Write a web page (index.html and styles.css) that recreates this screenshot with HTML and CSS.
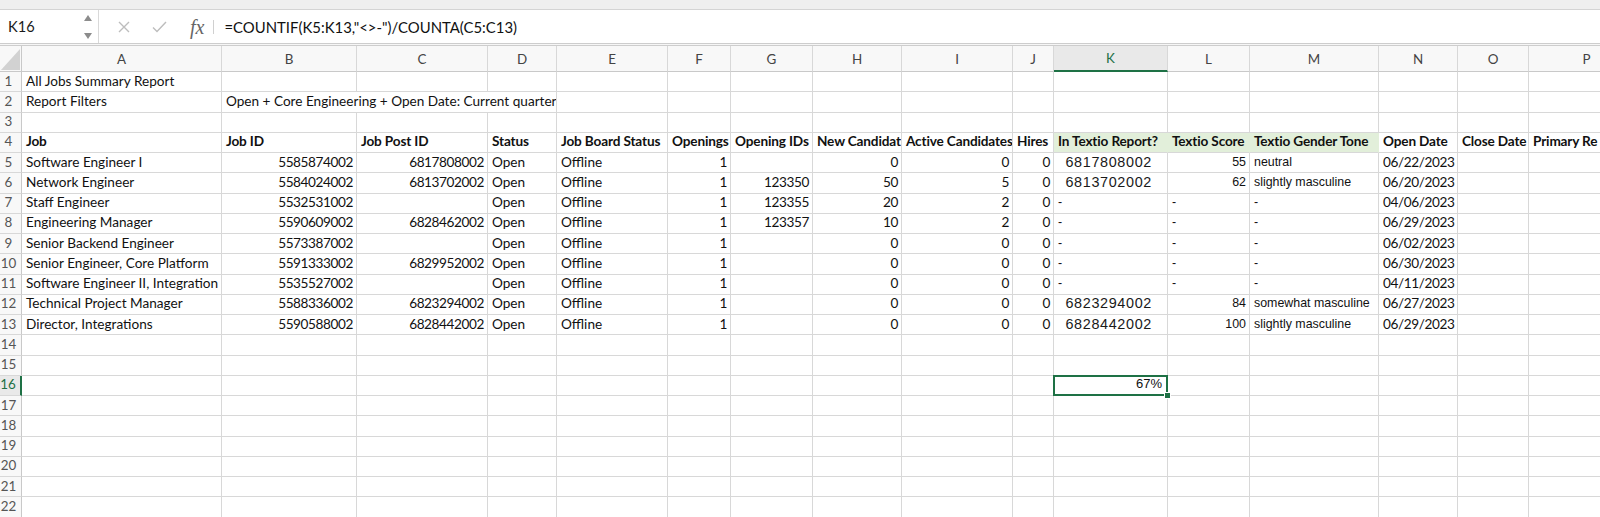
FILE: index.html
```html
<!DOCTYPE html>
<html lang="en">
<head>
<meta charset="utf-8">
<title>All Jobs Summary Report</title>
<link rel="stylesheet" href="styles.css">
</head>
<body>
<div class="top"></div>
<div class="fbar">
  <div class="namebox">
    <span class="ref">K16</span>
    <svg class="spin" viewBox="0 0 8 24" aria-hidden="true"><path d="M0 6 L4 0 L8 6 Z"/><path d="M0 18 L8 18 L4 24 Z"/></svg>
  </div>
  <svg class="ico ico-x" viewBox="0 0 12 12" aria-hidden="true"><path d="M1 1 L11 11 M11 1 L1 11"/></svg>
  <svg class="ico ico-ok" viewBox="0 0 15 12" aria-hidden="true"><path d="M1 6.5 L5 10.5 L14 1"/></svg>
  <span class="fx">fx</span>
  <span class="vsep"></span>
  <span class="formula">=COUNTIF(K5:K13,"&lt;&gt;-")/COUNTA(C5:C13)</span>
</div>
<div class="fsep"></div>
<table class="sheet">
<colgroup>
<col class="w-rh"><col class="w-a"><col class="w-b"><col class="w-c"><col class="w-d"><col class="w-e"><col class="w-f"><col class="w-g"><col class="w-h"><col class="w-i"><col class="w-j"><col class="w-k"><col class="w-l"><col class="w-m"><col class="w-n"><col class="w-o"><col class="w-p">
</colgroup>
<tr class="hdr"><th class="corner"><svg class="tri" viewBox="0 0 21 25" aria-hidden="true"><path d="M1 24 L20 24 L20 3 Z"/></svg></th><th class="ch">A</th><th class="ch">B</th><th class="ch">C</th><th class="ch">D</th><th class="ch">E</th><th class="ch">F</th><th class="ch">G</th><th class="ch">H</th><th class="ch">I</th><th class="ch">J</th><th class="ch on">K</th><th class="ch">L</th><th class="ch">M</th><th class="ch">N</th><th class="ch">O</th><th class="ch">P</th></tr>
<tr><th class="rh">1</th><td>All Jobs Summary Report</td><td></td><td></td><td></td><td></td><td></td><td></td><td></td><td></td><td></td><td></td><td></td><td></td><td></td><td></td><td></td></tr>
<tr><th class="rh">2</th><td>Report Filters</td><td colspan="3">Open + Core Engineering + Open Date: Current quarter</td><td></td><td></td><td></td><td></td><td></td><td></td><td></td><td></td><td></td><td></td><td></td><td></td></tr>
<tr><th class="rh">3</th><td></td><td></td><td></td><td></td><td></td><td></td><td></td><td></td><td></td><td></td><td></td><td></td><td></td><td></td><td></td><td></td></tr>
<tr><th class="rh">4</th><td class="b">Job</td><td class="b">Job ID</td><td class="b">Job Post ID</td><td class="b">Status</td><td class="b">Job Board Status</td><td class="b">Openings</td><td class="b">Opening IDs</td><td class="b">New Candidat</td><td class="b">Active Candidates</td><td class="b">Hires</td><td class="b g">In Textio Report?</td><td class="b g">Textio Score</td><td class="b g">Textio Gender Tone</td><td class="b">Open Date</td><td class="b">Close Date</td><td class="b">Primary Re</td></tr>
<tr><th class="rh">5</th><td>Software Engineer I</td><td class="r">5585874002</td><td class="r">6817808002</td><td>Open</td><td>Offline</td><td class="r">1</td><td></td><td class="r">0</td><td class="r">0</td><td class="r">0</td><td class="r k">6817808002</td><td class="r s">55</td><td class="s">neutral</td><td class="d">06/22/2023</td><td></td><td></td></tr>
<tr><th class="rh">6</th><td>Network Engineer</td><td class="r">5584024002</td><td class="r">6813702002</td><td>Open</td><td>Offline</td><td class="r">1</td><td class="r">123350</td><td class="r">50</td><td class="r">5</td><td class="r">0</td><td class="r k">6813702002</td><td class="r s">62</td><td class="s">slightly masculine</td><td class="d">06/20/2023</td><td></td><td></td></tr>
<tr><th class="rh">7</th><td>Staff Engineer</td><td class="r">5532531002</td><td></td><td>Open</td><td>Offline</td><td class="r">1</td><td class="r">123355</td><td class="r">20</td><td class="r">2</td><td class="r">0</td><td class="s">-</td><td class="s">-</td><td class="s">-</td><td class="d">04/06/2023</td><td></td><td></td></tr>
<tr><th class="rh">8</th><td>Engineering Manager</td><td class="r">5590609002</td><td class="r">6828462002</td><td>Open</td><td>Offline</td><td class="r">1</td><td class="r">123357</td><td class="r">10</td><td class="r">2</td><td class="r">0</td><td class="s">-</td><td class="s">-</td><td class="s">-</td><td class="d">06/29/2023</td><td></td><td></td></tr>
<tr><th class="rh">9</th><td>Senior Backend Engineer</td><td class="r">5573387002</td><td></td><td>Open</td><td>Offline</td><td class="r">1</td><td></td><td class="r">0</td><td class="r">0</td><td class="r">0</td><td class="s">-</td><td class="s">-</td><td class="s">-</td><td class="d">06/02/2023</td><td></td><td></td></tr>
<tr><th class="rh">10</th><td>Senior Engineer, Core Platform</td><td class="r">5591333002</td><td class="r">6829952002</td><td>Open</td><td>Offline</td><td class="r">1</td><td></td><td class="r">0</td><td class="r">0</td><td class="r">0</td><td class="s">-</td><td class="s">-</td><td class="s">-</td><td class="d">06/30/2023</td><td></td><td></td></tr>
<tr><th class="rh">11</th><td>Software Engineer II, Integration</td><td class="r">5535527002</td><td></td><td>Open</td><td>Offline</td><td class="r">1</td><td></td><td class="r">0</td><td class="r">0</td><td class="r">0</td><td class="s">-</td><td class="s">-</td><td class="s">-</td><td class="d">04/11/2023</td><td></td><td></td></tr>
<tr><th class="rh">12</th><td>Technical Project Manager</td><td class="r">5588336002</td><td class="r">6823294002</td><td>Open</td><td>Offline</td><td class="r">1</td><td></td><td class="r">0</td><td class="r">0</td><td class="r">0</td><td class="r k">6823294002</td><td class="r s">84</td><td class="s">somewhat masculine</td><td class="d">06/27/2023</td><td></td><td></td></tr>
<tr><th class="rh">13</th><td>Director, Integrations</td><td class="r">5590588002</td><td class="r">6828442002</td><td>Open</td><td>Offline</td><td class="r">1</td><td></td><td class="r">0</td><td class="r">0</td><td class="r">0</td><td class="r k">6828442002</td><td class="r s">100</td><td class="s">slightly masculine</td><td class="d">06/29/2023</td><td></td><td></td></tr>
<tr><th class="rh">14</th><td></td><td></td><td></td><td></td><td></td><td></td><td></td><td></td><td></td><td></td><td></td><td></td><td></td><td></td><td></td><td></td></tr>
<tr><th class="rh">15</th><td></td><td></td><td></td><td></td><td></td><td></td><td></td><td></td><td></td><td></td><td></td><td></td><td></td><td></td><td></td><td></td></tr>
<tr><th class="rh on">16</th><td></td><td></td><td></td><td></td><td></td><td></td><td></td><td></td><td></td><td></td><td class="r s sel">67%</td><td></td><td></td><td></td><td></td><td></td></tr>
<tr><th class="rh">17</th><td></td><td></td><td></td><td></td><td></td><td></td><td></td><td></td><td></td><td></td><td></td><td></td><td></td><td></td><td></td><td></td></tr>
<tr><th class="rh">18</th><td></td><td></td><td></td><td></td><td></td><td></td><td></td><td></td><td></td><td></td><td></td><td></td><td></td><td></td><td></td><td></td></tr>
<tr><th class="rh">19</th><td></td><td></td><td></td><td></td><td></td><td></td><td></td><td></td><td></td><td></td><td></td><td></td><td></td><td></td><td></td><td></td></tr>
<tr><th class="rh">20</th><td></td><td></td><td></td><td></td><td></td><td></td><td></td><td></td><td></td><td></td><td></td><td></td><td></td><td></td><td></td><td></td></tr>
<tr><th class="rh">21</th><td></td><td></td><td></td><td></td><td></td><td></td><td></td><td></td><td></td><td></td><td></td><td></td><td></td><td></td><td></td><td></td></tr>
<tr><th class="rh">22</th><td></td><td></td><td></td><td></td><td></td><td></td><td></td><td></td><td></td><td></td><td></td><td></td><td></td><td></td><td></td><td></td></tr>
</table>
</body>
</html>
```
FILE: styles.css
```css
html, body {
  margin: 0;
  padding: 0;
  overflow: hidden;
  background: #ffffff;
}
body {
  width: 1600px;
  height: 517px;
  font-family: Lato, "Noto Sans", "Liberation Sans", sans-serif;
  color: #111111;
}

/* toolbar strip + formula bar */
.top {
  height: 9px;
  background: #efefef;
  border-bottom: 1px solid #d4d4d4;
}
.fbar {
  height: 33px;
  display: flex;
  align-items: center;
  background: #ffffff;
}
.namebox {
  box-sizing: border-box;
  width: 99px;
  height: 33px;
  flex: none;
  border-right: 1px solid #d9d9d9;
  display: flex;
  align-items: center;
  justify-content: space-between;
  padding: 0 6px 0 8px;
}
.ref {
  font-size: 14.6px;
  color: #1a1a1a;
}
.spin {
  display: block;
  width: 8px;
  height: 24px;
  fill: #8c8c8c;
}
.ico {
  display: block;
  flex: none;
  fill: none;
  stroke: #bdbdbd;
  stroke-width: 1.4;
}
.ico-x {
  margin-left: 19px;
  width: 12px;
  height: 12px;
}
.ico-ok {
  margin-left: 22px;
  width: 15px;
  height: 12px;
}
.fx {
  margin-left: 23px;
  font-family: "Liberation Serif", serif;
  font-style: italic;
  font-size: 20px;
  color: #666666;
  line-height: 1;
}
.vsep {
  display: block;
  margin-left: 9px;
  width: 1px;
  height: 14px;
  background: #d0d0d0;
}
.formula {
  margin-left: 10px;
  font-size: 14.9px;
  color: #111111;
  white-space: nowrap;
}
.fsep {
  box-sizing: border-box;
  height: 3px;
  border-top: 1px solid #cdcdcd;
  border-bottom: 1px solid #cdcdcd;
  background: #f6f6f6;
}

/* sheet grid */
.sheet {
  border-collapse: separate;
  border-spacing: 0;
  table-layout: fixed;
  width: 1645px;
}
.w-rh { width: 22px; }
.w-a { width: 200px; }
.w-b { width: 135px; }
.w-c { width: 131px; }
.w-d { width: 69px; }
.w-e { width: 111px; }
.w-f { width: 63px; }
.w-g { width: 82px; }
.w-h { width: 89px; }
.w-i { width: 111px; }
.w-j { width: 41px; }
.w-k { width: 114px; }
.w-l { width: 82px; }
.w-m { width: 129px; }
.w-n { width: 79px; }
.w-o { width: 71px; }
.w-p { width: 116px; }

.sheet tr { height: 20.25px; }
.sheet tr.hdr { height: 26px; }

.sheet td,
.sheet th {
  box-sizing: border-box;
  padding: 0 3px 2px 4px;
  border-right: 1px solid #d8d8d8;
  border-bottom: 1px solid #d8d8d8;
  white-space: nowrap;
  overflow: hidden;
  font-size: 13.6px;
  line-height: 16px;
  vertical-align: middle;
  text-align: left;
  font-weight: 400;
  color: #111111;
}
.sheet th.ch {
  padding: 0;
  text-align: center;
  background: #f8f8f8;
  color: #444444;
  border-bottom-color: #c9c9c9;
  font-size: 13.4px;
}
.sheet th.rh {
  padding: 0 4px 2px 0;
  text-align: center;
  background: #f8f8f8;
  color: #555555;
  border-right-color: #c9c9c9;
  font-size: 13.4px;
}
.sheet th.corner {
  padding: 0;
  background: #f8f8f8;
  border-right-color: #c9c9c9;
  border-bottom-color: #c9c9c9;
  vertical-align: bottom;
}
.tri {
  display: block;
  width: 21px;
  height: 25px;
  fill: #d2d2d2;
}

.sheet th.on {
  background: #e9e9e9;
  color: #1e7145;
}
.sheet th.ch.on { border-bottom: 2px solid #1e7145; }
.sheet th.rh.on { border-right: 2px solid #1e7145; }

.sheet td.r {
  text-align: right;
  letter-spacing: -0.4px;
}
.sheet td.d { letter-spacing: -0.4px; }
.sheet td.b {
  font-weight: 700;
  letter-spacing: -0.15px;
}
.sheet td.g {
  background: #e2efda;
  border-right-color: #e2efda;
}
.sheet td.s {
  font-family: "Liberation Sans", Arial, sans-serif;
  font-size: 12.4px;
  letter-spacing: 0;
}
.sheet td.k {
  font-family: "Liberation Sans", Arial, sans-serif;
  font-size: 14.4px;
  letter-spacing: 0.65px;
  padding-right: 15px;
  color: #1a1a1a;
}

.sheet td.sel {
  position: relative;
  overflow: visible;
  padding-right: 5px;
  font-size: 13px;
}
.sheet td.sel::after {
  content: "";
  position: absolute;
  left: -1px;
  top: -1px;
  right: -1px;
  bottom: -1px;
  border: 2px solid #1e7145;
}
.sheet td.sel::before {
  content: "";
  position: absolute;
  right: -4px;
  bottom: -4px;
  width: 5px;
  height: 5px;
  background: #1e7145;
  border: 1px solid #ffffff;
  z-index: 1;
}
```
